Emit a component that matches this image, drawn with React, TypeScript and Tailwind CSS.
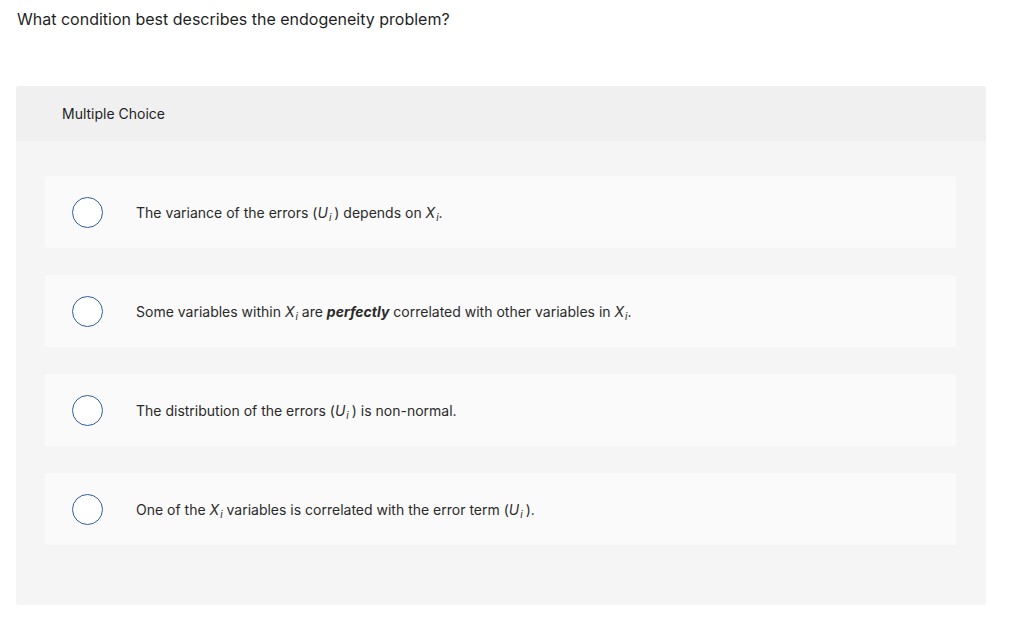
import React from "react";

const U = () => (
  <span className="italic">
    U<sub className="text-[10px] italic align-baseline relative top-[3px] ml-[1px] mr-[3px]">i</sub>
  </span>
);
const X = () => (
  <span className="italic">
    X<sub className="text-[10px] italic align-baseline relative top-[3px] ml-[1px]">i</sub>
  </span>
);

const options: React.ReactNode[] = [
  <>
    The variance of the errors (<U />) depends on <X />.
  </>,
  <>
    Some variables within <X /> are <b className="italic font-bold">perfectly</b> correlated with other variables in <X />.
  </>,
  <>
    The distribution of the errors (<U />) is non-normal.
  </>,
  <>
    One of the <X /> variables is correlated with the error term (<U />).
  </>,
];

export default function App() {
  return (
    <div
      className="w-[1024px] h-[634px] bg-white text-[#222] overflow-hidden"
      style={{ fontFamily: 'Inter, "Liberation Sans", Arial, sans-serif' }}
    >
      <div className="pl-[17px] pt-[9px] text-[16px] leading-[20px] text-[#1f1f1f]">
        What condition best describes the endogeneity problem?
      </div>
      <div className="mt-[57px] ml-[16px] w-[970px] h-[519px] rounded-[3px] bg-[#f5f5f5] overflow-hidden">
        <div className="h-[55px] bg-[#f0f0f0] flex items-center pl-[46px] text-[14px] text-[#1f1f1f]">
          Multiple Choice
        </div>
        <div className="pt-[35px] pl-[29px] pr-[30px] flex flex-col gap-[27px]">
          {options.map((o, i) => (
            <div
              key={i}
              className="h-[72px] rounded-[3px] bg-[#fafafa] flex items-center pl-[27px]"
            >
              <div className="w-[31px] h-[31px] rounded-full border-[1.5px] border-[#2f5f9f] bg-white shrink-0" />
              <div className="ml-[33px] text-[14px] text-[#2a2a2a]">{o}</div>
            </div>
          ))}
        </div>
      </div>
    </div>
  );
}
